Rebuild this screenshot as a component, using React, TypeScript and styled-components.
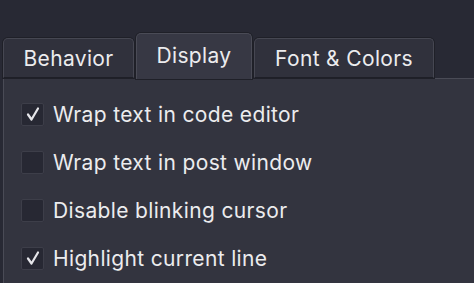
import React from "react";
import styled, { createGlobalStyle } from "styled-components";

const GlobalStyle = createGlobalStyle`
  html, body {
    margin: 0;
    padding: 0;
    background: #282934;
  }
  body {
    font-family: Inter, "Noto Sans", "Liberation Sans", sans-serif;
    -webkit-font-smoothing: antialiased;
  }
`;

const Window = styled.div`
  width: 474px;
  height: 283px;
  overflow: hidden;
  background: #282934;
  padding-top: 33px;
  box-sizing: border-box;
`;

const TabBar = styled.div`
  display: flex;
  align-items: flex-end;
  gap: 2px;
  padding-left: 3px;
  position: relative;
  z-index: 1;
`;

const Tab = styled.div<{ $active?: boolean; $width: number }>`
  box-sizing: border-box;
  width: ${(p) => p.$width}px;
  height: ${(p) => (p.$active ? 46 : 40)}px;
  margin-bottom: ${(p) => (p.$active ? -1 : 0)}px;
  display: flex;
  align-items: center;
  justify-content: center;
  padding-bottom: ${(p) => (p.$active ? 2 : 0)}px;
  font-size: 21px;
  letter-spacing: 0.35px;
  color: #ececee;
  background: ${(p) => (p.$active ? "#373844" : "#30313c")};
  border: 1px solid ${(p) => (p.$active ? "#4a4b56" : "#464752")};
  border-bottom: ${(p) => (p.$active ? "none" : "1px solid #1e1f27")};
  border-radius: 5px 5px 0 0;
  box-shadow: 0 0 0 1px #1f2028;
`;

const Panel = styled.div`
  margin-left: 3px;
  height: 220px;
  background: #33343f;
  border-top: 1px solid #4a4b56;
  border-left: 1px solid #4a4b56;
  padding: 11px 0 0 17px;
`;

const Row = styled.label`
  display: flex;
  align-items: center;
  gap: 9px;
  height: 48px;
  font-size: 21px;
  letter-spacing: 0.35px;
  color: #ececee;
`;

const Box = styled.span`
  box-sizing: border-box;
  width: 23px;
  height: 23px;
  border-radius: 2px;
  background: #272833;
  border: 1px solid #3d3e49;
  display: flex;
  align-items: center;
  justify-content: center;
`;

const Check = () => (
  <svg width="16" height="16" viewBox="0 0 16 16">
    <path
      d="M3 8.5 L6.5 13.5 L13 2.5"
      fill="none"
      stroke="#e6e6ea"
      strokeWidth="2.2"
      strokeLinecap="round"
      strokeLinejoin="round"
    />
  </svg>
);

const options = [
  { label: "Wrap text in code editor", checked: true },
  { label: "Wrap text in post window", checked: false },
  { label: "Disable blinking cursor", checked: false },
  { label: "Highlight current line", checked: true },
];

export default function App() {
  return (
    <Window>
      <GlobalStyle />
      <TabBar>
        <Tab $width={131}>Behavior</Tab>
        <Tab $width={116} $active>
          Display
        </Tab>
        <Tab $width={180}>Font &amp; Colors</Tab>
      </TabBar>
      <Panel>
        {options.map((o) => (
          <Row key={o.label}>
            <Box>{o.checked && <Check />}</Box>
            {o.label}
          </Row>
        ))}
      </Panel>
    </Window>
  );
}
